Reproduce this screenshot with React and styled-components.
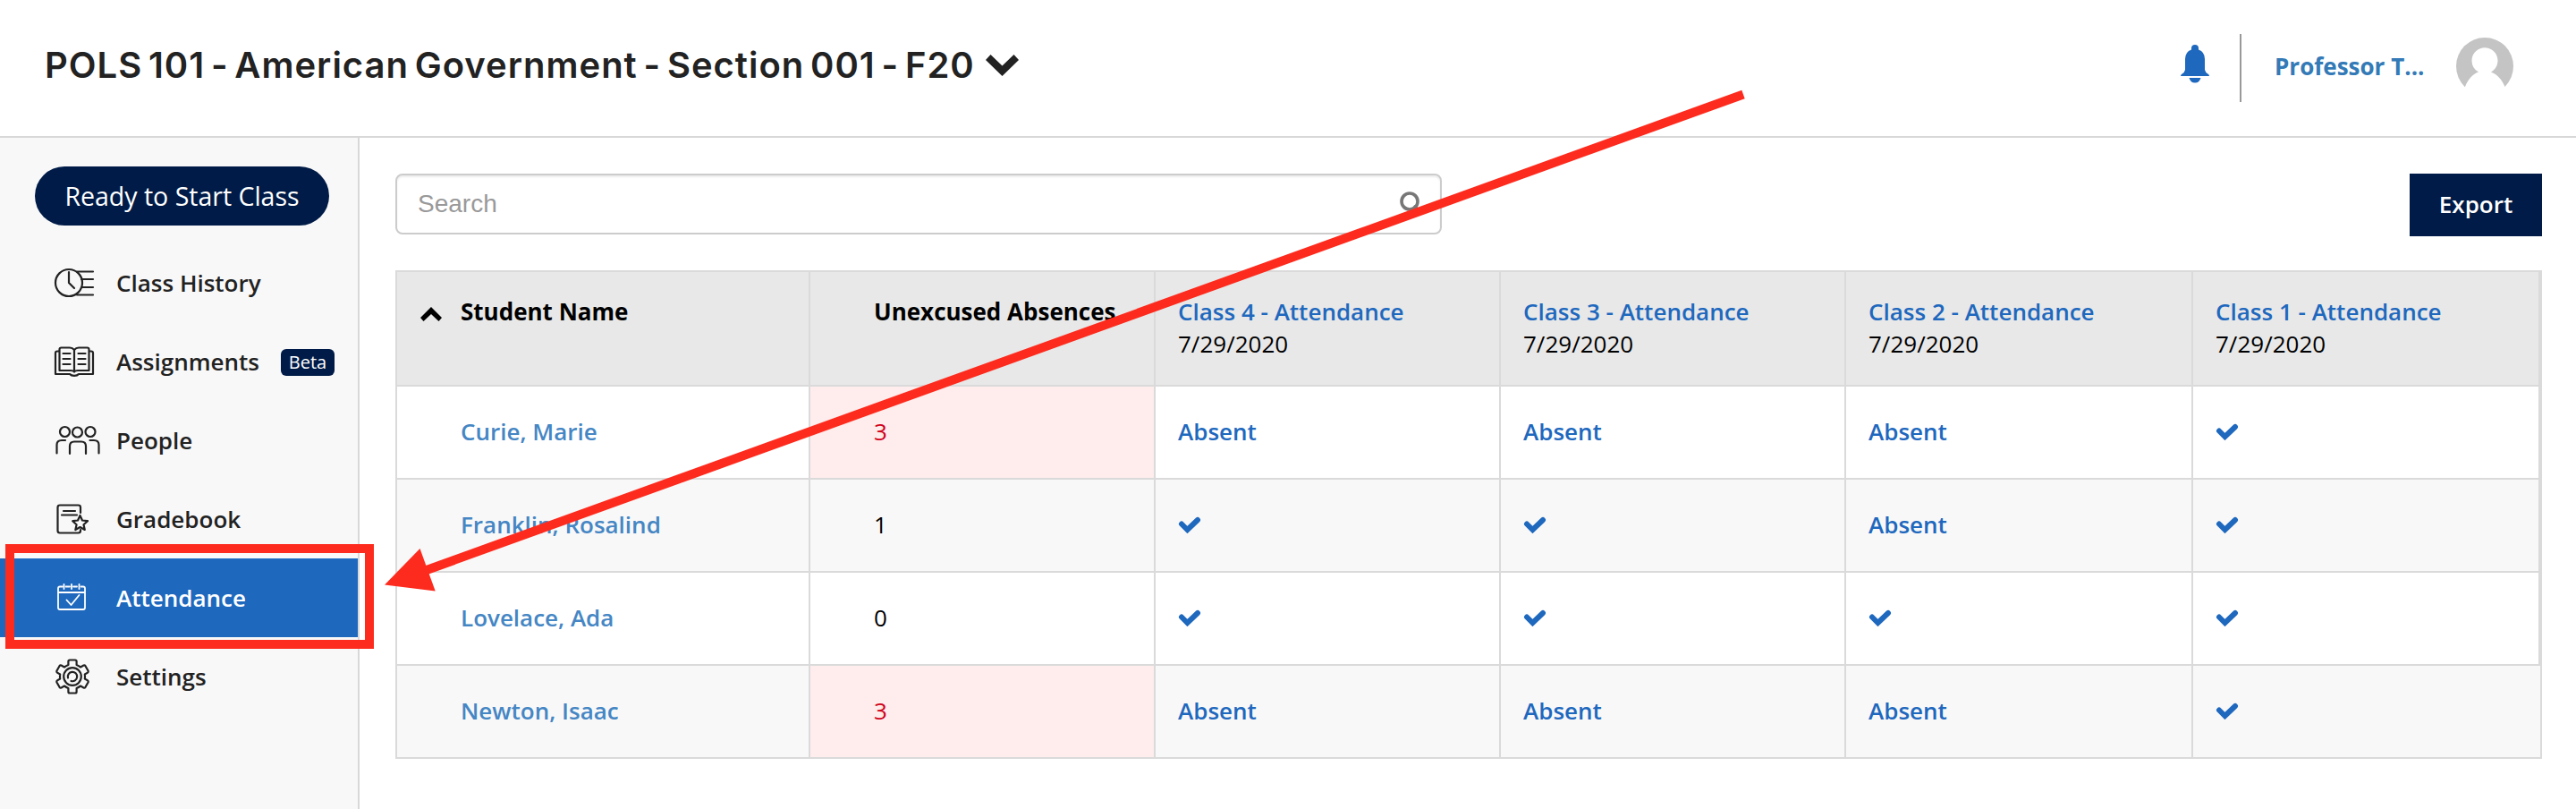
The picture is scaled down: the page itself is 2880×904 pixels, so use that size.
import React from 'react';
import styled, { createGlobalStyle, css } from 'styled-components';

const GlobalStyle = createGlobalStyle`
    * {
        box-sizing: border-box;
    }
    body {
        margin: 0;
        background: #fff;
        color: #000;
        font-family: "Open Sans", sans-serif;
        font-size: 26px;
    }
    svg {
        display: block;
    }
`

const Page = styled.div`
    position: relative;
    display: flex;
    flex-direction: column;
    height: 904px;
    overflow: hidden;
`
const Header = styled.header`
    display: flex;
    align-items: center;
    justify-content: space-between;
    height: 154px;
    padding: 0 70px 6px 50px;
    border-bottom: 2px solid #d8d8d8;
`
const Course = styled.div`
    display: flex;
    align-items: center;
    gap: 12px;
`
const CourseTitle = styled.h1`
    margin: 0;
    font: 600 40px/60px Inter, sans-serif;
    letter-spacing: 1px;
    word-spacing: -4.3px;
    color: #222;
    white-space: nowrap;
`
const Account = styled.div`
    display: flex;
    align-items: center;
`
const Divider = styled.div`
    width: 2px;
    height: 76px;
    margin: 6px 37px 0 34px;
    background: #999;
`
const UserName = styled.a`
    width: 203px;
    padding-top: 2px;
    font-weight: 700;
    line-height: 36px;
    color: #337ab7;
`
const Body = styled.div`
    display: flex;
    flex: 1;
`
const Sidebar = styled.aside`
    width: 402px;
    padding-top: 32px;
    background: #f8f8f8;
    border-right: 2px solid #d8d8d8;
`
const StartButton = styled.button`
    display: block;
    width: 329px;
    height: 66px;
    margin: 0 0 20px 39px;
    padding: 0;
    border: 0;
    border-radius: 33px;
    background: #001b47;
    color: #fff;
    font: 400 28.5px/66px "Open Sans", sans-serif;
`
const NavItem = styled.a`
    display: flex;
    align-items: center;
    height: 88px;
    padding-left: 60px;
    font-weight: 600;
    color: ${(props) => (props.$active ? '#fff' : '#222')};
    background: ${(props) => (props.$active ? '#1e68be' : 'transparent')};
`
const NavIcon = styled.div`
    width: 70px;
`
const Badge = styled.span`
    width: 60px;
    height: 30px;
    margin: 2px 0 0 24px;
    border-radius: 6px;
    background: #001b47;
    color: #fff;
    font-size: 20px;
    font-weight: 400;
    line-height: 29px;
    text-align: center;
`
const Main = styled.main`
    flex: 1;
    padding: 40px 38px 0 40px;
`
const Toolbar = styled.div`
    display: flex;
    justify-content: space-between;
    height: 108px;
`
const SearchBox = styled.div`
    display: flex;
    align-items: center;
    justify-content: space-between;
    width: 1170px;
    height: 68px;
    padding: 0 16px 0 23px;
    border: 2px solid #ccc;
    border-radius: 8px;
    box-shadow: inset 0 2px 2px rgba(0, 0, 0, 0.075);
    font: 28px "Liberation Sans", Arial, sans-serif;
    color: #999;
`
const ExportButton = styled.button`
    width: 148px;
    height: 70px;
    padding: 0 0 2px;
    border: 0;
    background: #001b47;
    color: #fff;
    font: 600 26px "Open Sans", sans-serif;
`
const Table = styled.div`
    border: 2px solid #dadada;
`
const cells = css`
    display: grid;
    grid-template-columns: 462px 386px 386px 386px 388px 388px;
    border-bottom: 2px solid #dadada;
`
const HeadRow = styled.div`
    ${cells}
    height: 128px;
    background: #e8e8e8;
`
const Row = styled.div`
    ${cells}
    height: 104px;
    background: ${(props) => (props.$striped ? '#f8f8f8' : '#fff')};
    &:last-child {
        height: 102px;
        border-bottom: 0;
    }
    &:last-child > :last-child {
        border-right: 0;
    }
`
const HeadCell = styled.div`
    display: flex;
    gap: 21px;
    padding: 26px 0 0 ${(props) => props.$indent || 25}px;
    border-right: 2px solid #dadada;
    font-weight: 700;
    line-height: 36px;
    white-space: nowrap;
`
const ClassLink = styled.a`
    display: block;
    font-weight: 600;
    color: #1e68be;
`
const ClassDate = styled.div`
    font-weight: 400;
`
const Cell = styled.div`
    display: flex;
    align-items: center;
    padding: 0 0 2px ${(props) => props.$indent || 25}px;
    border-right: 2px solid #dadada;
    color: ${(props) => (props.$alert ? '#d0021b' : 'inherit')};
    background: ${(props) => (props.$alert ? '#ffecec' : 'transparent')};
`
const StudentLink = styled.a`
    font-weight: 600;
    color: #4586c4;
`
const Absent = styled.a`
    font-weight: 600;
    color: #1e68be;
`
const Highlight = styled.div`
    position: absolute;
    left: 6px;
    top: 608px;
    width: 412px;
    height: 117px;
    border: 10px solid #fd2b1e;
`
const Arrow = styled.svg`
    position: absolute;
    left: 0;
    top: 0;
`

const Stroke = ({ w, h, children, width = 2.2 }) => (
    <svg width={w} height={h} viewBox={`0 0 ${w} ${h}`} fill="none" stroke="currentColor"
        strokeWidth={width} strokeLinecap="round" strokeLinejoin="round">
        {children}
    </svg>
)

const HistoryIcon = () => (
    <Stroke w={46} h={34}>
        <circle cx="17" cy="17" r="15" />
        <path d="M17 5v12l6 6M26 4.500h18M31 13h13M31 22h13M26 30.500h18" />
    </Stroke>
)

const BookIcon = () => (
    <Stroke w={46} h={34}>
        <path d="M23 4Q21 1.500 18 1.500H8.500Q6.500 1.500 6.500 3.500V27H19Q22 27 23 28.500Q24 27 27 27H39.500V3.500Q39.500 1.500 37.500 1.500H28Q25 1.500 23 4V28" />
        <path d="M6 5.500H4Q2 5.500 2 7.500V31H18Q19.500 32.800 23 32.800T28 31H44V7.500Q44 5.500 42 5.500H40" />
        <path d="M10.500 8H18.500M10.500 14H18.500M10.500 20H18.500M27.500 8H35.500M27.500 14H35.500M27.500 20H35.500" />
    </Stroke>
)

const PeopleIcon = () => (
    <Stroke w={54} h={34}>
        <circle cx="12.500" cy="7.500" r="5.500" />
        <circle cx="26.500" cy="8" r="5.500" />
        <circle cx="41" cy="7.500" r="5.500" />
        <path d="M3.500 31.500V22Q3.500 17 9 17H13M18 32V23.500Q18 18.500 23 18.500H31Q36 18.500 36 23.500V32M40.500 17H45Q50.500 17 50.500 22V31.500" />
    </Stroke>
)

const GradebookIcon = () => (
    <Stroke w={46} h={36}>
        <path d="M30 11V5Q30 2.500 27.500 2.500H7Q4.500 2.500 4.500 5V31Q4.500 33.500 7 33.500H27.500Q30 33.500 30 31V30M11 9H24M9 13.500H26" />
        <path d="M29.500 14L32 19.500L38 20.200L33.500 24.200L34.800 30L29.500 27L24.300 30L25.600 24.200L21.200 20.200L27 19.500Z" />
    </Stroke>
)

const AttendanceIcon = () => (
    <Stroke w={46} h={34} width={1.8}>
        <path d="M10 4.500H7Q5 4.500 5 6.500V28Q5 30 7 30H33Q35 30 35 28V6.500Q35 4.500 33 4.500H30.500M13.500 4.500H18M22 4.500H26M5 11H35" />
        <path d="M11.500 2V7M20 2V7M28.500 2V7M14.500 19.500L19.500 25L28.500 14" />
    </Stroke>
)

const SettingsIcon = () => (
    <Stroke w={46} h={40}>
        <path d="M18 1.500H24Q25.600 1.500 25.600 3V7Q28 8 30 9.500L33.500 7.500Q34.700 7 35.500 8.200L38.500 13.500Q39 14.800 38 15.600L34.800 17.500Q35.200 20 34.800 22.500L38 24.400Q39 25.200 38.500 26.500L35.500 31.800Q34.700 33 33.500 32.500L30 30.500Q28 32 25.600 33V37Q25.600 38.500 24 38.500H18Q16.400 38.500 16.400 37V33Q14 32 12 30.500L8.500 32.500Q7.300 33 6.500 31.800L3.500 26.500Q3 25.200 4 24.400L7.200 22.500Q6.800 20 7.200 17.500L4 15.600Q3 14.800 3.500 13.500L6.500 8.200Q7.300 7 8.500 7.500L12 9.500Q14 8 16.400 7V3Q16.400 1.500 18 1.500Z" />
        <circle cx="21" cy="20" r="9.800" />
        <path d="M16 21.500A5.200 5.200 0 1 1 19.500 25" />
    </Stroke>
)

const BellIcon = styled((props) => (
    <svg {...props} width="32" height="43" viewBox="0 0 32 43" fill="#1e68be">
        <path d="M12 5.500V4Q12 0 16 0T20 4V5.500Q27 8 27 16V28Q27.500 31 31 33Q32 34 32 35H0Q0 34 1 33Q4.500 31 5 28V16Q5 8 12 5.500ZM9.500 37H22.500Q21 42.500 16 42.500T9.500 37Z" />
    </svg>
))`
    margin-bottom: 3px;
`

const Avatar = styled((props) => (
    <svg {...props} width="64" height="64" viewBox="0 0 64 64">
        <circle cx="32" cy="32" r="32" fill="#c4c4c4" />
        <path d="M17.500 26A14.500 14.500 0 1 1 39 38.500C46 41 51 47 54.500 55L60 64H4L10 55C13 47 18 41 25 38.500A14.500 14.500 0 0 1 17.500 26Z" fill="#fff" />
    </svg>
))`
    margin-top: 2px;
`

const ChevronDown = () => (
    <svg width="37" height="24" viewBox="0 0 37 24" fill="#222">
        <path d="M5.500 0L18.500 12.500L31.500 0L37 6L18.500 24L0 6Z" />
    </svg>
)

const SortIcon = styled.svg`
    margin: 13px 0 0 1px;
`

const Check = () => (
    <svg width="26" height="20" viewBox="0 0 26 20" fill="none" stroke="#1e68be" strokeWidth="6">
        <path d="M4 9.500L10.500 16L22 5" strokeLinejoin="miter" strokeLinecap="round" />
    </svg>
)

const navItems = [
    { label: 'Class History', Icon: HistoryIcon },
    { label: 'Assignments', Icon: BookIcon, badge: 'Beta' },
    { label: 'People', Icon: PeopleIcon },
    { label: 'Gradebook', Icon: GradebookIcon },
    { label: 'Attendance', Icon: AttendanceIcon, active: true },
    { label: 'Settings', Icon: SettingsIcon },
]

const classes = [4, 3, 2, 1]

const students = [
    { name: 'Curie, Marie', absences: 3, present: [false, false, false, true] },
    { name: 'Franklin, Rosalind', absences: 1, present: [true, true, false, true] },
    { name: 'Lovelace, Ada', absences: 0, present: [true, true, true, true] },
    { name: 'Newton, Isaac', absences: 3, present: [false, false, false, true] },
]

const AttendanceTable = () => (
    <Table>
        <HeadRow>
            <HeadCell>
                <SortIcon width="24" height="16" viewBox="0 0 24 16">
                    <path d="M12 0L24 12L20.500 16L12 8L3.500 16L0 12Z" />
                </SortIcon>
                Student Name
            </HeadCell>
            <HeadCell $indent={71}>Unexcused Absences</HeadCell>
            {classes.map((n) => (
                <HeadCell key={n}>
                    <div>
                        <ClassLink>Class {n} - Attendance</ClassLink>
                        <ClassDate>7/29/2020</ClassDate>
                    </div>
                </HeadCell>
            ))}
        </HeadRow>
        {students.map((student, i) => (
            <Row key={student.name} $striped={i % 2 === 1}>
                <Cell $indent={71}><StudentLink>{student.name}</StudentLink></Cell>
                <Cell $indent={71} $alert={student.absences >= 3}>{student.absences}</Cell>
                {student.present.map((here, j) => (
                    <Cell key={j}>{here ? <Check /> : <Absent>Absent</Absent>}</Cell>
                ))}
            </Row>
        ))}
    </Table>
)

const App = () => (
    <Page>
        <GlobalStyle />
        <Header>
            <Course>
                <CourseTitle>POLS 101 - American Government - Section 001 - F20</CourseTitle>
                <ChevronDown />
            </Course>
            <Account>
                <BellIcon />
                <Divider />
                <UserName>Professor T...</UserName>
                <Avatar />
            </Account>
        </Header>
        <Body>
            <Sidebar>
                <StartButton>Ready to Start Class</StartButton>
                {navItems.map(({ label, Icon, badge, active }) => (
                    <NavItem key={label} $active={active}>
                        <NavIcon><Icon /></NavIcon>
                        {label}
                        {badge && <Badge>{badge}</Badge>}
                    </NavItem>
                ))}
            </Sidebar>
            <Main>
                <Toolbar>
                    <SearchBox>
                        Search
                        <svg width="30" height="30" viewBox="0 0 30 30" fill="none" stroke="#777" strokeWidth="3.600">
                            <circle cx="12" cy="12" r="9" />
                            <path d="M18 18L22 22" strokeLinecap="round" />
                        </svg>
                    </SearchBox>
                    <ExportButton>Export</ExportButton>
                </Toolbar>
                <AttendanceTable />
            </Main>
        </Body>
        <Highlight />
        <Arrow width="2880" height="904" viewBox="0 0 2880 904">
            <path d="M477 637L1949 105.500" stroke="#fd2b1e" strokeWidth="10" />
            <path d="M430 653.500L469.500 613L486.700 660.500Z" fill="#fd2b1e" />
        </Arrow>
    </Page>
)

export default App;
